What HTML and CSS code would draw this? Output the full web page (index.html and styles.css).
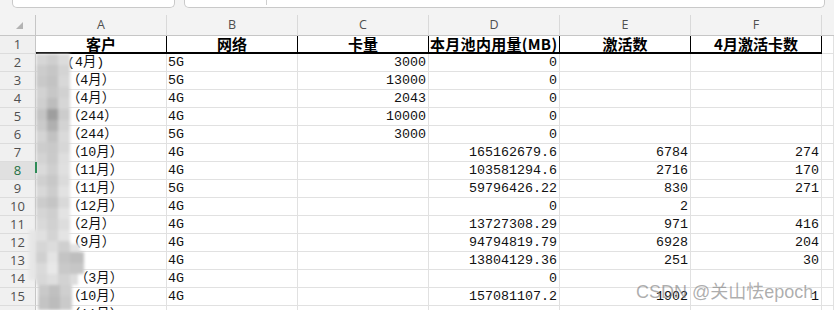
FILE: index.html
```html
<!DOCTYPE html>
<html lang="zh-CN">
<head>
<meta charset="utf-8">
<title>Sheet</title>
<link rel="stylesheet" href="styles.css">
</head>
<body>
<div class="toolbar">
  <div class="box box1"></div>
  <div class="box box2"><div class="namebox"></div></div>
</div>
<div class="gap"></div>
<div class="sheet">
  <div class="corner"><svg width="7" height="7" viewBox="0 0 7 7"><polygon points="7,0 7,7 0,7" fill="#b3b3b3"/></svg></div>
  <div class="ch">A</div><div class="ch">B</div><div class="ch">C</div><div class="ch">D</div><div class="ch">E</div><div class="ch">F</div><div class="ch last"></div>

  <div class="rh">1</div><div class="c h">客户</div><div class="c h">网络</div><div class="c h">卡量</div><div class="c h hl">本月池内用量(MB)</div><div class="c h">激活数</div><div class="c h">4月激活卡数</div><div class="c"></div>

  <div class="rh">2</div><div class="c a">(4月)</div><div class="c b">5G</div><div class="c n">3000</div><div class="c n">0</div><div class="c n"></div><div class="c n"></div><div class="c"></div>
  <div class="rh">3</div><div class="c a">（4月）</div><div class="c b">5G</div><div class="c n">13000</div><div class="c n">0</div><div class="c n"></div><div class="c n"></div><div class="c"></div>
  <div class="rh">4</div><div class="c a">（4月）</div><div class="c b">4G</div><div class="c n">2043</div><div class="c n">0</div><div class="c n"></div><div class="c n"></div><div class="c"></div>
  <div class="rh">5</div><div class="c a">（244）</div><div class="c b">4G</div><div class="c n">10000</div><div class="c n">0</div><div class="c n"></div><div class="c n"></div><div class="c"></div>
  <div class="rh">6</div><div class="c a">（244）</div><div class="c b">5G</div><div class="c n">3000</div><div class="c n">0</div><div class="c n"></div><div class="c n"></div><div class="c"></div>
  <div class="rh">7</div><div class="c a">（10月）</div><div class="c b">4G</div><div class="c n"></div><div class="c n">165162679.6</div><div class="c n">6784</div><div class="c n">274</div><div class="c"></div>
  <div class="rh sel">8</div><div class="c a">（11月）</div><div class="c b">4G</div><div class="c n"></div><div class="c n">103581294.6</div><div class="c n">2716</div><div class="c n">170</div><div class="c"></div>
  <div class="rh">9</div><div class="c a">（11月）</div><div class="c b">5G</div><div class="c n"></div><div class="c n">59796426.22</div><div class="c n">830</div><div class="c n">271</div><div class="c"></div>
  <div class="rh">10</div><div class="c a">（12月）</div><div class="c b">4G</div><div class="c n"></div><div class="c n">0</div><div class="c n">2</div><div class="c n"></div><div class="c"></div>
  <div class="rh">11</div><div class="c a">（2月）</div><div class="c b">4G</div><div class="c n"></div><div class="c n">13727308.29</div><div class="c n">971</div><div class="c n">416</div><div class="c"></div>
  <div class="rh">12</div><div class="c a">（9月）</div><div class="c b">4G</div><div class="c n"></div><div class="c n">94794819.79</div><div class="c n">6928</div><div class="c n">204</div><div class="c"></div>
  <div class="rh">13</div><div class="c a"></div><div class="c b">4G</div><div class="c n"></div><div class="c n">13804129.36</div><div class="c n">251</div><div class="c n">30</div><div class="c"></div>
  <div class="rh">14</div><div class="c a a2">（3月）</div><div class="c b">4G</div><div class="c n"></div><div class="c n">0</div><div class="c n"></div><div class="c n"></div><div class="c"></div>
  <div class="rh">15</div><div class="c a">（10月）</div><div class="c b">4G</div><div class="c n"></div><div class="c n">157081107.2</div><div class="c n">1902</div><div class="c n">1</div><div class="c"></div>
  <div class="rh"></div><div class="c a">（11月）</div><div class="c b"></div><div class="c n"></div><div class="c n"></div><div class="c n"></div><div class="c n"></div><div class="c"></div>
</div>

<svg class="mosaic" width="62" height="256" viewBox="28 54 62 256">
  <g>
    <rect x="36" y="54" width="11" height="11" fill="#d6d6d6"/><rect x="47" y="54" width="11" height="11" fill="#cfcfcf"/><rect x="58" y="54" width="12" height="11" fill="#dcdcdc"/>
    <rect x="36" y="65" width="11" height="11" fill="#cccccc"/><rect x="47" y="65" width="11" height="11" fill="#c6c6c6"/><rect x="58" y="65" width="12" height="11" fill="#d4d4d4"/>
    <rect x="36" y="76" width="11" height="11" fill="#c9c9c9"/><rect x="47" y="76" width="11" height="11" fill="#c3c3c3"/><rect x="58" y="76" width="12" height="11" fill="#d8d8d8"/>
    <rect x="36" y="87" width="11" height="11" fill="#d2d2d2"/><rect x="47" y="87" width="11" height="11" fill="#c7c7c7"/><rect x="58" y="87" width="12" height="11" fill="#d1d1d1"/>
    <rect x="36" y="98" width="11" height="11" fill="#cfcfcf"/><rect x="47" y="98" width="11" height="11" fill="#bdbdbd"/><rect x="58" y="98" width="12" height="11" fill="#d6d6d6"/>
    <rect x="36" y="109" width="11" height="11" fill="#c4c4c4"/><rect x="47" y="109" width="11" height="11" fill="#9e9e9e"/><rect x="58" y="109" width="12" height="11" fill="#cccccc"/>
    <rect x="36" y="120" width="11" height="11" fill="#cacaca"/><rect x="47" y="120" width="11" height="11" fill="#b0b0b0"/><rect x="58" y="120" width="12" height="11" fill="#d3d3d3"/>
    <rect x="36" y="131" width="11" height="11" fill="#d4d4d4"/><rect x="47" y="131" width="11" height="11" fill="#c2c2c2"/><rect x="58" y="131" width="12" height="11" fill="#dadada"/>
    <rect x="36" y="142" width="11" height="11" fill="#cdcdcd"/><rect x="47" y="142" width="11" height="11" fill="#c9c9c9"/><rect x="58" y="142" width="12" height="11" fill="#d7d7d7"/>
    <rect x="36" y="153" width="11" height="11" fill="#d3d3d3"/><rect x="47" y="153" width="11" height="11" fill="#cacaca"/><rect x="58" y="153" width="12" height="11" fill="#dedede"/>
    <rect x="36" y="164" width="11" height="11" fill="#dadada"/><rect x="47" y="164" width="11" height="11" fill="#cfcfcf"/><rect x="58" y="164" width="12" height="11" fill="#e0e0e0"/>
    <rect x="36" y="175" width="11" height="11" fill="#d0d0d0"/><rect x="47" y="175" width="11" height="11" fill="#c8c8c8"/><rect x="58" y="175" width="12" height="11" fill="#dbdbdb"/>
    <rect x="36" y="186" width="11" height="11" fill="#d8d8d8"/><rect x="47" y="186" width="11" height="11" fill="#cdcdcd"/><rect x="58" y="186" width="12" height="11" fill="#e2e2e2"/>
    <rect x="36" y="197" width="11" height="11" fill="#cccccc"/><rect x="47" y="197" width="11" height="11" fill="#c5c5c5"/><rect x="58" y="197" width="12" height="11" fill="#d9d9d9"/>
    <rect x="36" y="208" width="11" height="11" fill="#d5d5d5"/><rect x="47" y="208" width="11" height="11" fill="#cfcfcf"/><rect x="58" y="208" width="12" height="11" fill="#e3e3e3"/>
    <rect x="36" y="219" width="11" height="11" fill="#d9d9d9"/><rect x="47" y="219" width="11" height="11" fill="#d1d1d1"/><rect x="58" y="219" width="12" height="11" fill="#dddddd"/>
    <rect x="29" y="230" width="7" height="50" fill="#e6e6e6"/>
    <rect x="36" y="230" width="11" height="11" fill="#e0e0e0"/><rect x="47" y="230" width="11" height="11" fill="#d4d4d4"/><rect x="58" y="230" width="12" height="11" fill="#e4e4e4"/>
    <rect x="36" y="241" width="11" height="11" fill="#d6d6d6"/><rect x="47" y="241" width="11" height="11" fill="#dcdcdc"/><rect x="58" y="241" width="12" height="11" fill="#cfcfcf"/><rect x="70" y="244" width="10" height="8" fill="#e4e4e4"/>
    <rect x="36" y="252" width="11" height="11" fill="#d0d0d0"/><rect x="47" y="252" width="11" height="11" fill="#e4e4e4"/><rect x="58" y="252" width="12" height="11" fill="#c4c4c4"/><rect x="70" y="252" width="14" height="11" fill="#bebebe"/>
    <rect x="36" y="263" width="11" height="11" fill="#dadada"/><rect x="47" y="263" width="11" height="11" fill="#e8e8e8"/><rect x="58" y="263" width="12" height="11" fill="#c9c9c9"/><rect x="70" y="263" width="14" height="11" fill="#c6c6c6"/>
    <rect x="36" y="274" width="11" height="11" fill="#d8d8d8"/><rect x="47" y="274" width="11" height="11" fill="#dedede"/><rect x="58" y="274" width="12" height="11" fill="#d2d2d2"/><rect x="70" y="274" width="8" height="11" fill="#dcdcdc"/>
    <rect x="38" y="285" width="11" height="11" fill="#c9c9c9"/><rect x="49" y="285" width="11" height="11" fill="#c0c0c0"/><rect x="60" y="285" width="12" height="11" fill="#cfcfcf"/>
    <rect x="38" y="296" width="11" height="14" fill="#c4c4c4"/><rect x="49" y="296" width="11" height="14" fill="#bcbcbc"/><rect x="60" y="296" width="12" height="14" fill="#cacaca"/>
  </g>
</svg>
<div class="cursor"></div>
<div class="watermark">CSDN @关山怯epoch</div>
</body>
</html>
```
FILE: styles.css
```css
html, body {
  margin: 0;
  padding: 0;
}
body {
  width: 834px;
  height: 310px;
  overflow: hidden;
  position: relative;
  background: #ffffff;
  font-family: "Liberation Mono", "Noto Sans CJK SC", monospace;
}
.toolbar {
  height: 8px;
  background: #f3f3f3;
  display: flex;
  align-items: flex-end;
}
.box {
  height: 8px;
  box-sizing: border-box;
  background: #ffffff;
  border: 1px solid #c9c9c9;
  border-top: none;
  border-radius: 0 0 5px 5px;
}
.box1 {
  margin-left: 12px;
  width: 163px;
}
.box2 {
  margin-left: 9px;
  width: 641px;
}
.namebox {
  width: 81px;
  height: 5px;
  border-right: 1px solid #cfcfcf;
}
.gap {
  height: 7px;
  background: #f3f3f3;
}
.sheet {
  display: grid;
  grid-template-columns: 36px repeat(6, 131px) 1fr;
  grid-template-rows: 21px;
  grid-auto-rows: 18px;
}
.corner, .ch {
  background: #f3f3f3;
  box-sizing: border-box;
  border-bottom: 1px solid #c6c6c6;
}
.corner {
  border-right: 1px solid #c6c6c6;
  display: flex;
  align-items: center;
  justify-content: center;
  padding-left: 3px;
}
.ch {
  border-right: 1px solid #d9d9d9;
  font-family: "Open Sans", "Noto Sans", sans-serif;
  font-size: 12.5px;
  color: #4f4f4f;
  text-align: center;
  line-height: 20px;
}
.ch.last {
  border-right: none;
}
.rh {
  background: #f0f0f0;
  box-sizing: border-box;
  border-right: 1px solid #c6c6c6;
  border-bottom: 1px solid #dcdcdc;
  font-family: "Open Sans", "Noto Sans", sans-serif;
  font-size: 13px;
  color: #4f4f4f;
  text-align: center;
  line-height: 17px;
}
.rh.sel {
  background: #e0e0e0;
  color: #1f7244;
}
.c {
  box-sizing: border-box;
  border-right: 1px solid #e1e1e1;
  border-bottom: 1px solid #e1e1e1;
  font-size: 13.33px;
  line-height: 17px;
  color: #111111;
  white-space: nowrap;
  overflow: visible;
  padding: 0 2px;
}
.c.h {
  border-right-color: #000000;
  border-bottom: 2px solid #000000;
  font-family: "Noto Sans CJK SC", sans-serif;
  font-weight: 700;
  font-size: 15px;
  line-height: 16px;
  color: #000000;
  text-align: center;
}
.c.hl {
  text-align: left;
  padding-left: 1px;
  padding-right: 0;
  letter-spacing: 0.3px;
}
.c.a {
  padding-left: 31px;
}
.c.a2 {
  padding-left: 39px;
}
.c.b {
  padding-left: 1px;
}
.c.n {
  text-align: right;
  padding-right: 2px;
}
.mosaic {
  position: absolute;
  left: 28px;
  top: 54px;
  filter: blur(1.6px);
}
.cursor {
  position: absolute;
  left: 35px;
  top: 162px;
  width: 2px;
  height: 11px;
  background: #2e8b57;
}
.watermark {
  position: absolute;
  left: 636px;
  top: 280px;
  font-family: "Liberation Sans", "Noto Sans CJK SC", sans-serif;
  font-size: 18px;
  line-height: 24px;
  color: rgba(120, 120, 120, 0.6);
  white-space: nowrap;
}
```
